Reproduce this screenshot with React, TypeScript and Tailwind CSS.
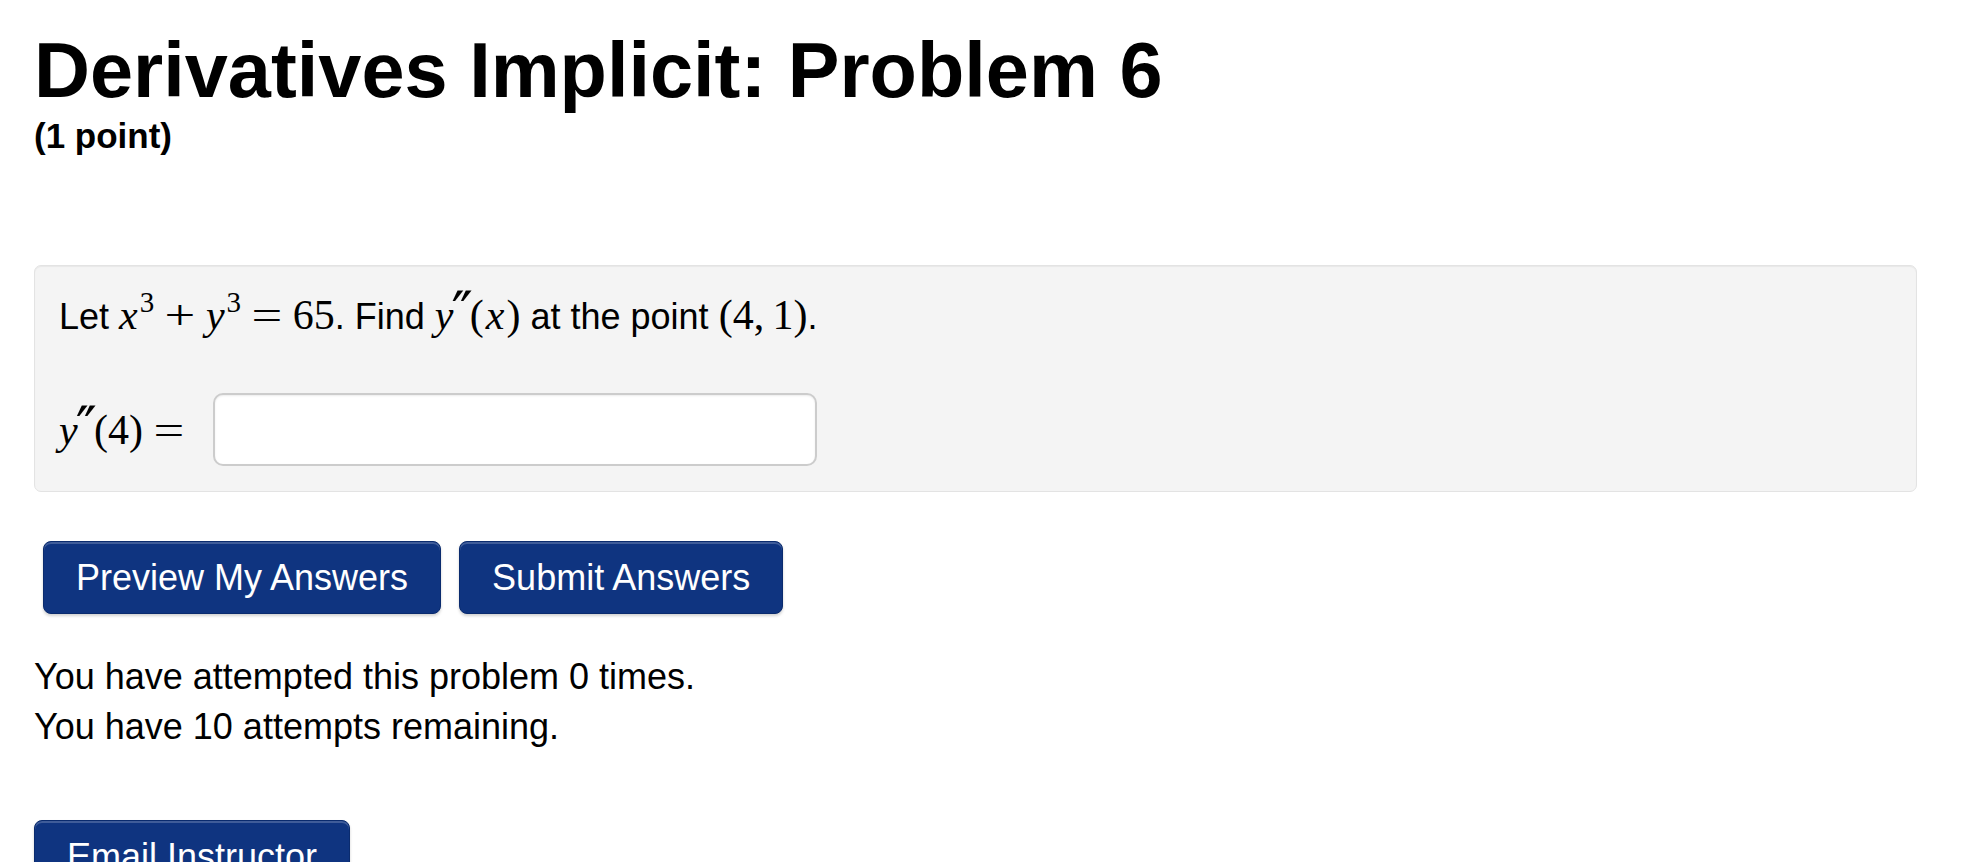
import React from 'react';

const mathFont = "font-['Liberation_Serif',serif] text-[42px]";
const btn =
  "h-[73px] px-[32px] rounded-[8px] border border-[#0a2b6e] bg-[#0f3480] text-white text-[36px] leading-[40px] shadow-[inset_0_2px_0_rgba(255,255,255,0.2),0_2px_3px_rgba(0,0,0,0.18)]";

const Sup = ({ children }: { children: React.ReactNode }) => (
  <sup className="text-[29px] relative -top-[17px] align-baseline ml-[2px] leading-[0px]">{children}</sup>
);

const Op = ({ children }: { children: React.ReactNode }) => (
  <span className="inline-block mx-[14px] not-italic scale-x-[1.3] leading-[40px]">{children}</span>
);

const Primes = () => (
  <span className="leading-[0px] relative top-[4px] -ml-[2px] mr-[2px] text-[58px] font-['DejaVu_Serif',serif] tracking-[-5px]">
    ′′
  </span>
);

export default function App() {
  return (
    <div className="h-screen overflow-hidden bg-white text-black font-['Liberation_Sans',Arial,sans-serif] pl-[34px] pr-[45px]">
      {/* Heading */}
      <h1 className="mt-[28px] text-[77.5px] leading-[85px] font-bold">Derivatives Implicit: Problem 6</h1>
      <div className="mt-[3px] text-[35px] leading-[40px] font-bold">(1 point)</div>

      {/* Problem well */}
      <div className="mt-[109px] rounded-[7px] border border-[#e3e3e3] bg-[#f4f4f4] pl-[24px] pt-[24px] pb-[25px] shadow-[inset_0_1px_1px_rgba(0,0,0,0.05)]">
        <p className="text-[36px] leading-[50px] h-[50px]">
          Let{' '}
          <span className={mathFont}>
            <i>x</i>
            <Sup>3</Sup>
            <Op>+</Op>
            <i>y</i>
            <Sup>3</Sup>
            <Op>=</Op>
            65
          </span>
          . Find{' '}
          <span className={mathFont}>
            <i>y</i>
            <Primes />(<i className="mx-[2px]">x</i>)
          </span>{' '}
          at the point{' '}
          <span className={mathFont}>(4,&thinsp;1)</span>.
        </p>
        <div className="mt-[53px] flex items-center gap-[18px] h-[73px]">
          <span className={`${mathFont} leading-[50px]`}>
            <i>y</i>
            <Primes />(4)
            <Op>=</Op>
          </span>
          <input
            type="text"
            className="w-[604px] h-[73px] rounded-[10px] border-2 border-[#cccccc] bg-white px-[14px] text-[36px] outline-none shadow-[inset_0_1px_2px_rgba(0,0,0,0.08)]"
          />
        </div>
      </div>

      {/* Actions */}
      <div className="mt-[49px] ml-[9px] flex gap-[18px]">
        <button className={btn}>Preview My Answers</button>
        <button className={btn}>Submit Answers</button>
      </div>

      <div className="mt-[38px] text-[36px] leading-[50px]">
        <div>You have attempted this problem 0 times.</div>
        <div>You have 10 attempts remaining.</div>
      </div>

      <div className="mt-[68px]">
        <button className={btn}>Email Instructor</button>
      </div>
    </div>
  );
}
